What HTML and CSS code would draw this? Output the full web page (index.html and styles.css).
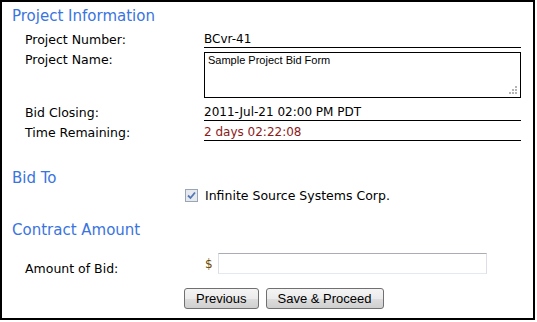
FILE: index.html
```html
<!DOCTYPE html>
<html lang="en">
<head>
<meta charset="UTF-8">
<meta name="viewport" content="width=device-width, initial-scale=1.0">
<title>Bid Form</title>
<link rel="stylesheet" href="styles.css">
</head>
<body>

<div class="panel">
    <h2 class="section-title">Project Information</h2>

    <div class="fields">
        <div class="label">Project Number:</div>
        <div class="value">BCvr-41</div>

        <div class="label">Project Name:</div>
        <div class="value-box">
            <textarea class="name-area" readonly>Sample Project Bid Form</textarea>
            <svg class="grip" width="8" height="8" viewBox="0 0 8 8">
                <rect x="6" y="0" width="2" height="2" fill="#b5b5b5"/>
                <rect x="3" y="3" width="2" height="2" fill="#b5b5b5"/>
                <rect x="6" y="3" width="2" height="2" fill="#b5b5b5"/>
                <rect x="0" y="6" width="2" height="2" fill="#b5b5b5"/>
                <rect x="3" y="6" width="2" height="2" fill="#b5b5b5"/>
                <rect x="6" y="6" width="2" height="2" fill="#b5b5b5"/>
            </svg>
        </div>

        <div class="label">Bid Closing:</div>
        <div class="value">2011-Jul-21 02:00 PM PDT</div>

        <div class="label">Time Remaining:</div>
        <div class="value remaining">2 days 02:22:08</div>
    </div>

    <h2 class="section-title bid-to">Bid To</h2>

    <div class="bidder">
        <span class="check">
            <svg width="9" height="9" viewBox="0 0 9 9">
                <path d="M1 4.5 L3.5 7 L8 1.5" fill="none" stroke="#5476b4" stroke-width="1.8"/>
            </svg>
        </span>
        <span>Infinite Source Systems Corp.</span>
    </div>

    <h2 class="section-title contract">Contract Amount</h2>

    <div class="amount-row">
        <div class="label">Amount of Bid:</div>
        <div class="amount-cell">
            <span class="dollar">$</span>
            <input type="text" class="amount-input">
        </div>
    </div>

    <div class="actions">
        <button class="btn">Previous</button>
        <button class="btn">Save &amp; Proceed</button>
    </div>
</div>

</body>
</html>
```

FILE: styles.css
```css
body { margin: 0; background: #fff; font-family: "DejaVu Sans", Verdana, sans-serif; font-size: 12px; color: #000; }
.panel { width: 531px; height: 316px; border: 2px solid #000; padding: 0; }

.section-title { margin: 5px 0 0; padding-left: 10px; font-size: 15px; font-weight: normal; color: #3a74e0; line-height: 18px; }
.bid-to { margin-top: 28px; }
.contract { margin-top: 18px; }

.fields { display: grid; grid-template-columns: 179px 317px; margin: 3px 0 0 23px; }
.label { line-height: 15px; padding-top: 4px; font-size: 12.5px; }
.value { line-height: 15px; padding-top: 4px; border-bottom: 1px solid #000; }
.remaining { color: #8b1a1a; }

.value-box { position: relative; padding: 4px 0 3px; }
.name-area { display: block; width: 317px; height: 46px; box-sizing: border-box; margin: 0; border: 1px solid #000; padding: 1px 3px; font-family: "Liberation Sans", Arial, sans-serif; font-size: 11px; resize: none; outline: none; }
.grip { position: absolute; right: 4px; bottom: 7px; }

.bidder { display: flex; align-items: center; gap: 7px; margin: 1px 0 0 183px; font-size: 12.5px; }
.check { display: flex; align-items: center; justify-content: center; width: 11px; height: 11px; border: 1px solid #9aa6b6; background: #e6e9ee; }

.amount-row { display: flex; align-items: flex-start; margin: 14px 0 0 23px; }
.amount-row .label { width: 180px; padding-top: 8px; }
.amount-cell { display: flex; align-items: center; gap: 5px; }
.dollar { color: #6b4a00; }
.amount-input { width: 269px; height: 21px; box-sizing: border-box; margin: 0; padding: 1px 3px; border: 1px solid #dbdfe6; border-top-color: #abadb3; border-bottom-color: #e3e9ef; }

.actions { display: flex; gap: 7px; margin: 12px 0 0 182px; }
.btn { height: 21px; padding: 0 11px; font-family: "Liberation Sans", Arial, sans-serif; font-size: 13px; color: #000; border: 1px solid #707070; border-radius: 3px; background: linear-gradient(#f4f4f4, #ebebeb 50%, #dddddd 51%, #cfcfcf); }
```
